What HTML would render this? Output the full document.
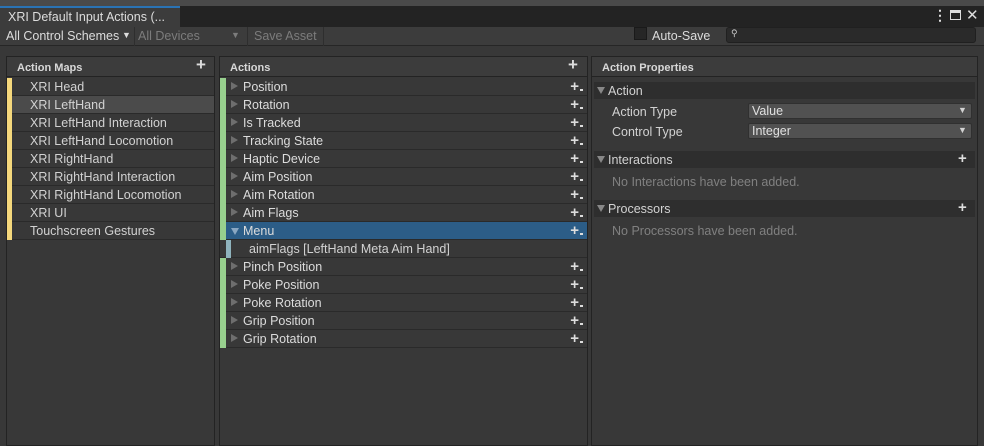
<!DOCTYPE html>
<html><head><style>
*{margin:0;padding:0;box-sizing:border-box}
body{width:984px;height:440px;background:#383838;font-family:"Liberation Sans",sans-serif;font-size:12px;color:#d2d2d2;position:relative;overflow:hidden}
.a{position:absolute}
.row{position:absolute;height:18px;line-height:19px;border-bottom:1px solid #2a2a2a;white-space:nowrap}
.bar{position:absolute;left:0;top:0;width:6px;height:18px}
.tri{position:absolute;width:0;height:0;border-top:4.5px solid transparent;border-bottom:4.5px solid transparent;border-left:7px solid #6e6e6e;top:4px}
.plus{position:absolute;right:8px;top:0;font-size:15px;font-weight:bold;color:#ddd;line-height:17px}
.plus:after{content:"";position:absolute;right:-4px;top:11px;width:3px;height:2px;background:#ddd}
.hdr{font-weight:bold;font-size:11px;color:#d8d8d8}
</style></head><body>
<div class="a" style="left:0;top:0;width:984px;height:6px;background:#4a4a4a"></div>
<div class="a" style="left:0;top:6px;width:984px;height:21px;background:#232323"></div>
<div class="a" style="left:0;top:6px;width:180px;height:21px;background:#3c3c3c;border-top:2px solid #2a73b4"></div>
<div class="a" style="left:8px;top:10px;font-size:12.5px;color:#ddd">XRI Default Input Actions (...</div>
<div class="a" style="left:933px;top:7px;font-size:14px;color:#ddd;font-weight:bold">⋮</div>
<div class="a" style="left:950px;top:10px;width:11px;height:10px;border:1.5px solid #ddd;border-top-width:3px"></div>
<div class="a" style="left:966px;top:6px;font-size:15px;color:#ddd">✕</div>
<div class="a" style="left:0;top:27px;width:984px;height:19px;background:#3c3c3c;border-bottom:1px solid #262626"></div>
<div class="a" style="left:6px;top:29px;font-size:12.5px;color:#dcdcdc">All Control Schemes</div>
<div class="a" style="left:122px;top:30px;font-size:9px;color:#dcdcdc">▼</div>
<div class="a" style="left:134px;top:27px;width:114px;height:19px;border-left:1px solid #2e2e2e;border-right:1px solid #2e2e2e"></div>
<div class="a" style="left:138px;top:29px;font-size:12.5px;color:#7c7c7c">All Devices</div>
<div class="a" style="left:231px;top:30px;font-size:9px;color:#7c7c7c">▼</div>
<div class="a" style="left:254px;top:29px;font-size:12.5px;color:#7c7c7c">Save Asset</div>
<div class="a" style="left:323px;top:27px;width:1px;height:19px;background:#2e2e2e"></div>
<div class="a" style="left:634px;top:27px;width:13px;height:13px;background:#262626;border:1px solid #1a1a1a"></div>
<div class="a" style="left:652px;top:29px;font-size:12.5px;color:#dcdcdc">Auto-Save</div>
<div class="a" style="left:726px;top:27px;width:250px;height:16px;background:#2a2a2a;border:1px solid #202020;border-radius:3px"></div>
<div class="a" style="left:731px;top:28px;font-size:9px;color:#ccc">⚲</div>

<div class="a" style="left:6px;top:56px;width:209px;height:390px;border:1px solid #232323;background:#383838"></div>
<div class="a" style="left:7px;top:57px;width:207px;height:20px;background:#3c3c3c;border-bottom:1px solid #232323"></div>
<div class="a hdr" style="left:17px;top:62px">Action Maps</div>
<div class="a" style="left:196px;top:55px;font-size:17px;font-weight:bold;color:#ddd">+</div>
<div class="a" style="left:219px;top:56px;width:369px;height:390px;border:1px solid #232323;background:#383838"></div>
<div class="a" style="left:220px;top:57px;width:367px;height:20px;background:#3c3c3c;border-bottom:1px solid #232323"></div>
<div class="a hdr" style="left:230px;top:62px">Actions</div>
<div class="a" style="left:568px;top:55px;font-size:17px;font-weight:bold;color:#ddd">+</div>
<div class="a" style="left:591px;top:56px;width:387px;height:390px;border:1px solid #232323;background:#383838"></div>
<div class="a" style="left:592px;top:57px;width:385px;height:20px;background:#3c3c3c;border-bottom:1px solid #232323"></div>
<div class="a hdr" style="left:602px;top:62px">Action Properties</div>

<div id="maps"></div>
<div id="acts"></div>

<div class="a" style="left:594px;top:82px;width:381px;height:17px;background:#2e2e2e"></div>
<div class="a" style="left:597px;top:87px;width:0;height:0;border-left:4.5px solid transparent;border-right:4.5px solid transparent;border-top:7px solid #888"></div>
<div class="a" style="left:608px;top:84px;font-size:12.5px">Action</div>
<div class="a" style="left:612px;top:105px;font-size:12.5px">Action Type</div>
<div class="a" style="left:748px;top:103px;width:224px;height:16px;background:#515151;border:1px solid #303030;border-radius:2px"></div>
<div class="a" style="left:752px;top:104px;font-size:12.5px;color:#e0e0e0">Value</div>
<div class="a" style="left:958px;top:105px;font-size:9px">▼</div>
<div class="a" style="left:612px;top:125px;font-size:12.5px">Control Type</div>
<div class="a" style="left:748px;top:123px;width:224px;height:16px;background:#515151;border:1px solid #303030;border-radius:2px"></div>
<div class="a" style="left:752px;top:124px;font-size:12.5px;color:#e0e0e0">Integer</div>
<div class="a" style="left:958px;top:125px;font-size:9px">▼</div>

<div class="a" style="left:594px;top:151px;width:381px;height:17px;background:#2e2e2e"></div>
<div class="a" style="left:597px;top:156px;width:0;height:0;border-left:4.5px solid transparent;border-right:4.5px solid transparent;border-top:7px solid #888"></div>
<div class="a" style="left:608px;top:153px;font-size:12.5px">Interactions</div>
<div class="a" style="left:958px;top:150px;font-size:15px;font-weight:bold;color:#ddd">+</div>
<div class="a" style="left:612px;top:175px;font-size:12.5px;color:#808080">No Interactions have been added.</div>
<div class="a" style="left:594px;top:200px;width:381px;height:17px;background:#2e2e2e"></div>
<div class="a" style="left:597px;top:205px;width:0;height:0;border-left:4.5px solid transparent;border-right:4.5px solid transparent;border-top:7px solid #888"></div>
<div class="a" style="left:608px;top:202px;font-size:12.5px">Processors</div>
<div class="a" style="left:958px;top:199px;font-size:15px;font-weight:bold;color:#ddd">+</div>
<div class="a" style="left:612px;top:224px;font-size:12.5px;color:#808080">No Processors have been added.</div>

<script>
var m=["XRI Head","XRI LeftHand","XRI LeftHand Interaction","XRI LeftHand Locomotion","XRI RightHand","XRI RightHand Interaction","XRI RightHand Locomotion","XRI UI","Touchscreen Gestures"];
var h="";
m.forEach(function(t,i){h+='<div class="row" style="left:7px;top:'+(78+i*18)+'px;width:207px;'+(i==1?'background:#4b4b4b;':'')+'"><div class="bar" style="background:#f5d87c;width:5px"></div><span style="position:absolute;left:23px;font-size:12.5px">'+t+'</span></div>';});
document.getElementById("maps").outerHTML=h;
var a=["Position","Rotation","Is Tracked","Tracking State","Haptic Device","Aim Position","Aim Rotation","Aim Flags","Menu","*","Pinch Position","Poke Position","Poke Rotation","Grip Position","Grip Rotation"];
h="";
a.forEach(function(t,i){var y=78+i*18;
if(t=="*"){h+='<div class="row" style="left:220px;top:'+y+'px;width:367px"><div class="bar" style="left:6px;background:#8fb3bd;width:5px"></div><span style="position:absolute;left:29px;font-size:12.5px">aimFlags [LeftHand Meta Aim Hand]</span></div>';return;}
var sel=t=="Menu";
h+='<div class="row" style="left:220px;top:'+y+'px;width:367px;'+(sel?'background:#2c5d87;':'')+'"><div class="bar" style="background:#98d08e;width:6px"></div>'+
(sel?'<div class="a" style="left:11px;top:6px;width:0;height:0;border-left:4.5px solid transparent;border-right:4.5px solid transparent;border-top:7px solid #8aa7c2"></div>':'<div class="tri" style="left:11px"></div>')+
'<span style="position:absolute;left:23px;font-size:12.5px;color:#dcdcdc">'+t+'</span><span class="plus">+</span></div>';});
document.getElementById("acts").outerHTML=h;
</script>
</body></html>
